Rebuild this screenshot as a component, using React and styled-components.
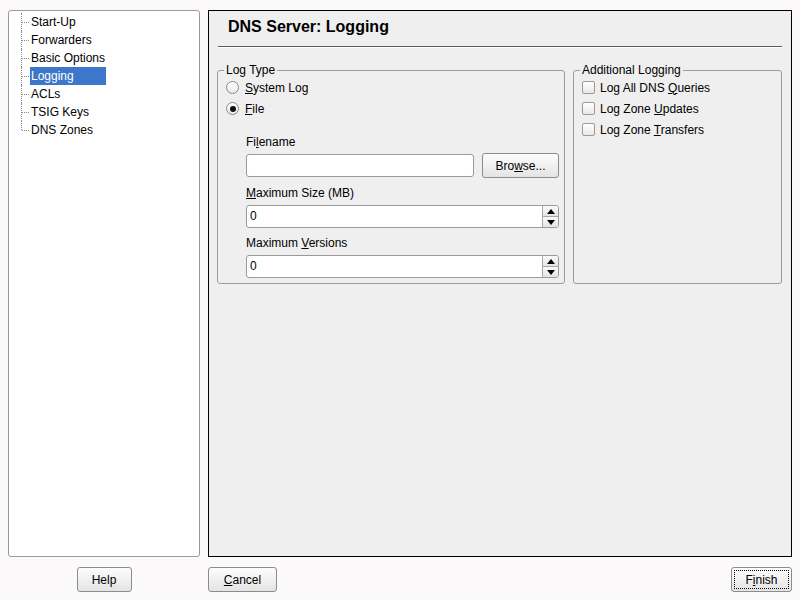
import React, { useState } from 'react';
import styled, { createGlobalStyle, css } from 'styled-components';

const GlobalStyle = createGlobalStyle`
  html, body {
    margin: 0;
    padding: 0;
  }
  body {
    font-family: "Liberation Sans", Arial, sans-serif;
    font-size: 12px;
    color: #000;
    background: #fcf9fb;
  }
`;

const Window = styled.div`
  width: 800px;
  height: 600px;
  box-sizing: border-box;
  padding: 10px 8px 0 8px;
  display: flex;
  flex-direction: column;
`;

const Main = styled.div`
  display: flex;
  gap: 8px;
  height: 547px;
`;

const Tree = styled.div`
  width: 192px;
  box-sizing: border-box;
  background: #fff;
  border: 1px solid #9a9a9a;
  border-radius: 3px;
  padding-top: 2px;
`;

const TreeList = styled.ul`
  list-style: none;
  margin: 0;
  padding: 0 0 0 12px;
`;

const TreeItem = styled.li`
  position: relative;
  height: 18px;
  line-height: 18px;
  padding-left: 9px;

  &::before {
    content: '';
    position: absolute;
    left: 0;
    top: 0;
    height: ${(p) => (p.$last ? '9px' : '18px')};
    border-left: 1px dotted #8a8a8a;
  }

  &::after {
    content: '';
    position: absolute;
    left: 1px;
    top: 9px;
    width: 7px;
    border-top: 1px dotted #8a8a8a;
  }
`;

const ItemLabel = styled.span`
  display: inline-block;
  padding: 0 1px;
  cursor: default;
  ${(p) =>
    p.$selected &&
    css`
      width: 74px;
      background: #3d77cc;
      color: #fff;
    `}
`;

const Panel = styled.div`
  flex: 1;
  background: #efefef;
  border: 1px solid #000;
  display: flex;
  flex-direction: column;
`;

const Header = styled.div`
  margin: 0 9px;
  padding: 6px 0 9px 10px;
  border-bottom: 1px solid #5a5a5a;
  box-shadow: 0 1px 0 #fff;
`;

const Title = styled.h1`
  margin: 0;
  font-size: 16px;
  font-weight: bold;
  line-height: 20px;
`;

const Groups = styled.div`
  display: grid;
  grid-template-columns: 348px 209px;
  gap: 8px;
  margin: 16px 9px 0 8px;
`;

const Group = styled.fieldset`
  margin: 0;
  min-width: 0;
  border: 1px solid #9c9c9c;
  border-radius: 3px;
  padding: 0 5px 5px 8px;
`;

const Legend = styled.legend`
  padding: 0 2px;
  margin-left: -2px;
  line-height: 14px;
  font-size: 12px;
`;

const OptionRow = styled.label`
  display: flex;
  align-items: center;
  gap: ${(p) => (p.$check ? '5px' : '6px')};
  height: 21px;
  cursor: default;
`;

const Radio = styled.span`
  width: 13px;
  height: 13px;
  box-sizing: border-box;
  border: 1px solid #8a8a8a;
  border-radius: 50%;
  background: linear-gradient(#ffffff, #e9e9e9);
  display: flex;
  align-items: center;
  justify-content: center;

  &::after {
    content: '';
    width: 6px;
    height: 6px;
    border-radius: 50%;
    background: ${(p) => (p.$checked ? '#111' : 'transparent')};
  }
`;

const Check = styled.span`
  width: 13px;
  height: 13px;
  box-sizing: border-box;
  border: 1px solid #9a9a9a;
  border-radius: 2px;
  background: linear-gradient(#ffffff, #e8e8e8);
`;

const U = styled.span`
  text-decoration: underline;
`;

const FileSection = styled.div`
  margin-top: 15px;
  padding-left: 20px;
`;

const FieldLabel = styled.div`
  line-height: 16px;
  margin-top: ${(p) => (p.$first ? '0' : '7px')};
  margin-bottom: ${(p) => (p.$first ? '3px' : '4px')};
`;

const FileRow = styled.div`
  display: flex;
  align-items: center;
  gap: 8px;
`;

const TextInput = styled.input`
  width: 228px;
  height: 23px;
  box-sizing: border-box;
  border: 1px solid #9a9a9a;
  border-radius: 3px;
  background: #fff;
  padding: 0 2px;
  font: inherit;
  outline: none;
`;

const SpinBox = styled.div`
  display: flex;
  width: 313px;
  height: 23px;
  box-sizing: border-box;
  border: 1px solid #9a9a9a;
  border-radius: 3px;
  background: #fff;
  overflow: hidden;
`;

const SpinValue = styled.div`
  flex: 1;
  padding-left: 3px;
  line-height: 21px;
`;

const SpinButtons = styled.div`
  width: 15px;
  display: flex;
  flex-direction: column;
  border-left: 1px solid #a8a8a8;
`;

const SpinHalf = styled.div`
  flex: 1;
  display: flex;
  align-items: center;
  justify-content: center;
  background: linear-gradient(#fafafa, #e4e4e4);
  & + & {
    border-top: 1px solid #a8a8a8;
  }
`;

const Button = styled.button`
  width: ${(p) => p.$w}px;
  height: 25px;
  box-sizing: border-box;
  padding: 0;
  border: 1px solid #8c8c8c;
  border-radius: 3px;
  background: linear-gradient(#fdfdfd, #e4e4e4);
  font-family: "Liberation Sans", Arial, sans-serif;
  font-size: 12px;
  color: #000;
  ${(p) =>
    p.$focused &&
    css`
      outline: 1px dotted #000;
      outline-offset: -4px;
    `}
`;

const Footer = styled.div`
  display: flex;
  align-items: center;
  margin-top: 10px;
`;

const HelpSlot = styled.div`
  width: 192px;
  display: flex;
  justify-content: center;
  margin-right: 8px;
`;

const Spacer = styled.div`
  flex: 1;
`;

const Arrow = ({ down }) => (
  <svg width="8" height="5" viewBox="0 0 8 5">
    <polygon points={down ? '0,0 8,0 4,5' : '0,5 8,5 4,0'} fill="#000" />
  </svg>
);

const Spin = ({ value }) => (
  <SpinBox>
    <SpinValue>{value}</SpinValue>
    <SpinButtons>
      <SpinHalf><Arrow /></SpinHalf>
      <SpinHalf><Arrow down /></SpinHalf>
    </SpinButtons>
  </SpinBox>
);

const treeItems = ['Start-Up', 'Forwarders', 'Basic Options', 'Logging', 'ACLs', 'TSIG Keys', 'DNS Zones'];

const App = () => {
  const [selected, setSelected] = useState('Logging');
  const [logType, setLogType] = useState('file');

  return (
    <Window>
      <GlobalStyle />
      <Main>
        <Tree>
          <TreeList>
            {treeItems.map((item, i) => (
              <TreeItem key={item} $last={i === treeItems.length - 1}>
                <ItemLabel $selected={item === selected} onClick={() => setSelected(item)}>
                  {item}
                </ItemLabel>
              </TreeItem>
            ))}
          </TreeList>
        </Tree>
        <Panel>
          <Header>
            <Title>DNS Server: Logging</Title>
          </Header>
          <Groups>
            <Group>
              <Legend>Log Type</Legend>
              <OptionRow onClick={() => setLogType('system')}>
                <Radio $checked={logType === 'system'} />
                <span><U>S</U>ystem Log</span>
              </OptionRow>
              <OptionRow onClick={() => setLogType('file')}>
                <Radio $checked={logType === 'file'} />
                <span><U>F</U>ile</span>
              </OptionRow>
              <FileSection>
                <FieldLabel $first>Fi<U>l</U>ename</FieldLabel>
                <FileRow>
                  <TextInput type="text" />
                  <Button $w={77}>Bro<U>w</U>se...</Button>
                </FileRow>
                <FieldLabel><U>M</U>aximum Size (MB)</FieldLabel>
                <Spin value="0" />
                <FieldLabel>Maximum <U>V</U>ersions</FieldLabel>
                <Spin value="0" />
              </FileSection>
            </Group>
            <Group>
              <Legend>Additional Logging</Legend>
              <OptionRow $check>
                <Check />
                <span>Log All DNS <U>Q</U>ueries</span>
              </OptionRow>
              <OptionRow $check>
                <Check />
                <span>Log Zone <U>U</U>pdates</span>
              </OptionRow>
              <OptionRow $check>
                <Check />
                <span>Log Zone <U>T</U>ransfers</span>
              </OptionRow>
            </Group>
          </Groups>
        </Panel>
      </Main>
      <Footer>
        <HelpSlot>
          <Button $w={55}>Help</Button>
        </HelpSlot>
        <Button $w={69}><U>C</U>ancel</Button>
        <Spacer />
        <Button $w={61} $focused>F<U>i</U>nish</Button>
      </Footer>
    </Window>
  );
};

export default App;
